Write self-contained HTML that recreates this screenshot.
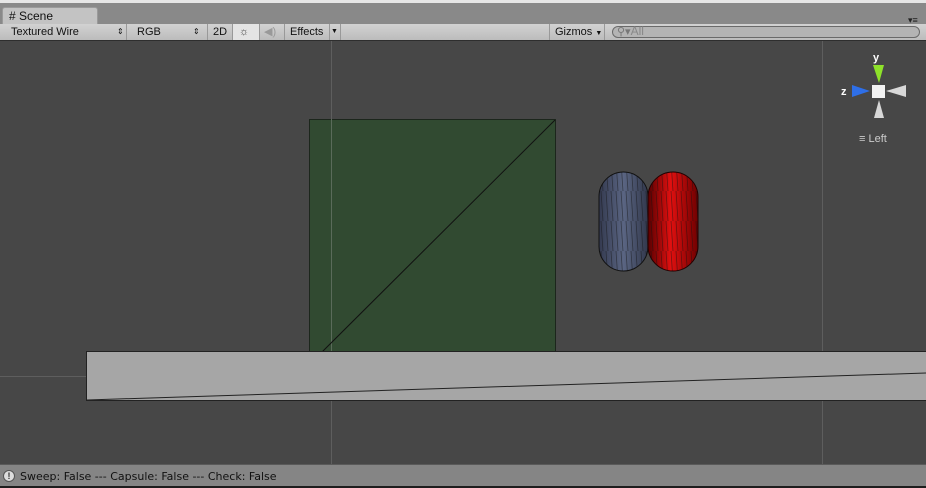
<!DOCTYPE html>
<html><head><style>
body{margin:0;width:926px;height:488px;overflow:hidden;background:#474747;font-family:"Liberation Sans",sans-serif;position:relative}
.a{position:absolute}
.tb{font-size:11px;color:#111;line-height:16px}
</style></head><body>
<div class="a" style="left:0;top:0;width:926px;height:3px;background:#e6e6e6"></div>
<div class="a" style="left:0;top:3px;width:926px;height:21px;background:#898989"></div>
<div class="a" style="left:2px;top:7px;width:96px;height:17px;background:#c3c3c3;border-radius:3px 3px 0 0;border:1px solid #9a9a9a;border-bottom:none;box-sizing:border-box"></div>
<div class="a tb" style="left:9px;top:8px;font-size:12px">#&nbsp;Scene</div>
<div class="a" style="left:908px;top:15px;color:#222;font-size:9px">▾≡</div>
<div class="a" style="left:0;top:24px;width:926px;height:17px;background:linear-gradient(#d2d2d2,#bcbcbc);border-bottom:1px solid #2e2e2e;box-sizing:border-box"></div>
<div class="a tb" style="left:11px;top:24px">Textured Wire</div>
<div class="a tb" style="left:117px;top:24px;font-size:8px">⇕</div>
<div class="a" style="left:126px;top:24px;width:1px;height:16px;background:#999"></div>
<div class="a tb" style="left:137px;top:24px">RGB</div>
<div class="a tb" style="left:193px;top:24px;font-size:8px">⇕</div>
<div class="a" style="left:207px;top:24px;width:1px;height:16px;background:#999"></div>
<div class="a tb" style="left:213px;top:24px">2D</div>
<div class="a" style="left:232px;top:24px;width:26px;height:16px;background:#e4e4e4;border-left:1px solid #999;border-right:1px solid #999"></div>
<div class="a tb" style="left:239px;top:24px;color:#444">☼</div>
<div class="a tb" style="left:264px;top:24px;color:#999">◀)</div>
<div class="a" style="left:284px;top:24px;width:1px;height:16px;background:#999"></div>
<div class="a tb" style="left:290px;top:24px">Effects</div>
<div class="a" style="left:329px;top:24px;width:1px;height:16px;background:#999"></div>
<div class="a tb" style="left:331px;top:24px;font-size:7px">▼</div>
<div class="a" style="left:340px;top:24px;width:1px;height:16px;background:#999"></div>
<div class="a" style="left:549px;top:24px;width:1px;height:16px;background:#999"></div>
<div class="a tb" style="left:555px;top:24px">Gizmos <span style="font-size:7px">▼</span></div>
<div class="a" style="left:604px;top:24px;width:1px;height:16px;background:#999"></div>
<div class="a" style="left:612px;top:26px;width:308px;height:12px;border:1px solid #6a6a6a;border-radius:7px;background:#b4b4b4;box-sizing:border-box"></div>
<div class="a tb" style="left:617px;top:23px;color:#777">⚲▾<span style="font-size:12px;color:#888">All</span></div>

<svg class="a" style="left:0;top:41px" width="926" height="425">
<line x1="331.5" y1="0" x2="331.5" y2="425" stroke="#5e5e5e"/>
<line x1="822.5" y1="0" x2="822.5" y2="425" stroke="#5e5e5e"/>
<line x1="0" y1="335.5" x2="926" y2="335.5" stroke="#5e5e5e"/>
<rect x="309.5" y="78.5" width="246" height="233" fill="#314a31" stroke="#1c261c"/>
<line x1="331.5" y1="78" x2="331.5" y2="311" stroke="#5a6b5a"/>
<line x1="555" y1="79" x2="322" y2="311" stroke="#111"/>
<rect x="86.5" y="310.5" width="850" height="49" fill="#a6a6a6" stroke="#222"/>
<polyline points="87,359 926,332" fill="none" stroke="#222"/>
<defs>
<linearGradient id="bg" x1="0" x2="1"><stop offset="0" stop-color="#343a50"/><stop offset=".5" stop-color="#5a6582"/><stop offset="1" stop-color="#32384c"/></linearGradient>
<linearGradient id="rg" x1="0" x2="1"><stop offset="0" stop-color="#5a0000"/><stop offset=".45" stop-color="#e01010"/><stop offset="1" stop-color="#700000"/></linearGradient>
<pattern id="wl" width="5" height="30" patternUnits="userSpaceOnUse"><line x1="1" y1="0" x2="3" y2="30" stroke="#111" stroke-width=".8" opacity=".5"/></pattern>
</defs>
<rect x="599" y="131" width="49" height="99" rx="24.5" fill="url(#bg)" stroke="#111"/>
<rect x="599" y="131" width="49" height="99" rx="24.5" fill="url(#wl)"/>
<rect x="648" y="131" width="50" height="99" rx="25" fill="url(#rg)" stroke="#200"/>
<rect x="648" y="131" width="50" height="99" rx="25" fill="url(#wl)"/>
<polygon points="873,24 884,24 879,42" fill="#8ee22a"/>
<polygon points="852,44 852,56 870,50" fill="#2e6fe8"/>
<polygon points="906,44 906,56 886,50" fill="#d8d8d8"/>
<polygon points="874,77 884,77 879,59" fill="#d8d8d8"/>
<rect x="872" y="44" width="13" height="13" fill="#f2f2f2"/>
<text x="873" y="20" font-size="11" font-weight="bold" fill="#fff" font-family="Liberation Sans">y</text>
<text x="841" y="54" font-size="11" font-weight="bold" fill="#fff" font-family="Liberation Sans">z</text>
<text x="859" y="101" font-size="11" fill="#ccc" font-family="Liberation Sans">≡ Left</text>
</svg>

<div class="a" style="left:0;top:464px;width:926px;height:24px;background:#858585;border-top:1px solid #5a5a5a;border-bottom:2px solid #1e1e1e;box-sizing:border-box"></div>
<div class="a" style="left:3px;top:470px;width:12px;height:12px;border-radius:50%;background:#ddd;border:1px solid #555;box-sizing:border-box;font-size:9px;font-weight:bold;text-align:center;line-height:10px;color:#333">!</div>
<div class="a" style="left:20px;top:470px;font-size:11px;font-family:'DejaVu Sans',sans-serif;color:#111;line-height:14px">Sweep: False --- Capsule: False --- Check: False</div>
</body></html>
